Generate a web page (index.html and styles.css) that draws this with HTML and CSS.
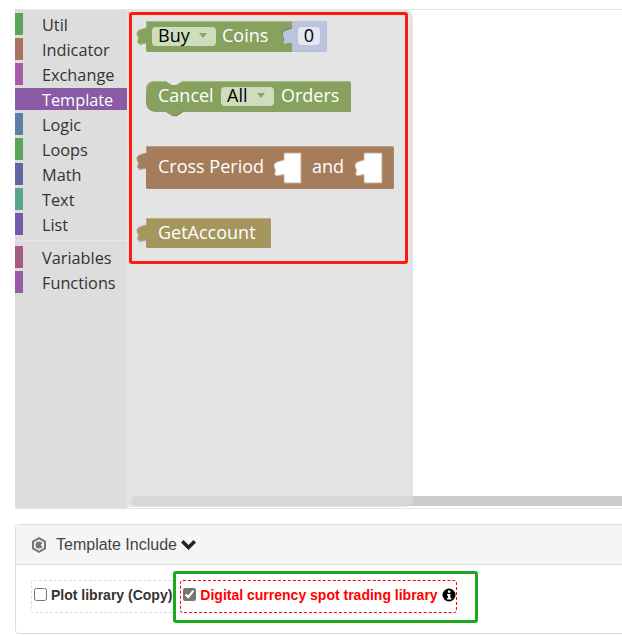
FILE: index.html
```html
<!DOCTYPE html>
<html lang="en">
<head>
<meta charset="utf-8">
<title>Template Include</title>
<link rel="stylesheet" href="styles.css">
</head>
<body>
<div class="page">
  <div class="editor">
    <ul class="toolbox">
      <li class="cat"><i class="swatch util"></i>Util</li>
      <li class="cat"><i class="swatch indicator"></i>Indicator</li>
      <li class="cat"><i class="swatch exchange"></i>Exchange</li>
      <li class="cat selected"><i class="swatch template"></i>Template</li>
      <li class="cat"><i class="swatch logic"></i>Logic</li>
      <li class="cat"><i class="swatch loops"></i>Loops</li>
      <li class="cat"><i class="swatch math"></i>Math</li>
      <li class="cat"><i class="swatch text"></i>Text</li>
      <li class="cat"><i class="swatch list"></i>List</li>
      <li class="sep"></li>
      <li class="cat"><i class="swatch variables"></i>Variables</li>
      <li class="cat"><i class="swatch functions"></i>Functions</li>
    </ul>
    <div class="scrollbar"></div>
    <div class="flyout">
      <svg class="blocks" width="286" height="497" viewBox="127 10 286 497">
        <defs>
          <path id="p-zero" d="M291 21H327V51H291V43c-3,-1 -5,2 -7.500,.5c-1.500,-1 -.5,-3.500 0,-5c.3,-1 -1.500,-2 -1.500,-5c0,-4 6,-4.500 9,-5.500V21z"/>
          <path id="p-buy" d="M146 21H291V28c-3,1 -9,1.500 -9,5.500c0,3 1.800,4 1.500,5c-.5,1.500 -1.500,4 0,5c2.500,1.500 4.500,-1.500 7.500,-.5V51H146V43c-3,-1 -5,2 -7.500,.5c-1.500,-1 -.5,-3.500 0,-5c.3,-1 -1.500,-2 -1.500,-5c0,-4 6,-4.500 9,-5.500V21z"/>
          <path id="p-cancel" d="M146 89a8,8 0 0 1 8,-8H165l7,4h4l7,-4H350V111H183l-7,4.500h-4l-7,-4.500H154a8,8 0 0 1 -8,-8z"/>
          <path id="p-cross" d="M146 146H393V188H146V168c-3,-1 -5,2 -7.500,.5c-1.500,-1 -.5,-3.500 0,-5c.3,-1 -1.500,-2 -1.500,-5c0,-4 6,-4.500 9,-5.500V146z"/>
          <path id="p-get" d="M146 218H270V247H146V240c-3,-1 -5,2 -7.500,.5c-1.500,-1 -.5,-3.500 0,-5c.3,-1 -1.500,-2 -1.500,-5c0,-4 6,-4.500 9,-5.500V218z"/>
          <path id="tab" d="M146 43c-3,-1 -5,2 -7.500,.5c-1.500,-1 -.5,-3.500 0,-5c.3,-1 -1.500,-2 -1.500,-5c0,-4 6,-4.500 9,-5.500"/>
        </defs>
        <!-- value block 0 -->
        <use href="#p-zero" class="s-blue"/>
        <use href="#p-zero" class="b-blue"/>
        <rect class="f-blue" x="298" y="27" width="22" height="18" rx="4"/>
        <text class="t-dark" x="309" y="41.500" text-anchor="middle">0</text>
        <!-- Buy Coins -->
        <use href="#p-buy" class="s-green"/>
        <use href="#p-buy" class="b-green"/>
        <use href="#tab" class="l-green"/>
        <path class="l-green" d="M146.500 28V21.500H290.500"/>
        <rect class="f-green" x="152" y="27" width="64" height="19" rx="4"/>
        <text class="t-dark" x="158" y="41.500">Buy</text>
        <path class="arrow" d="M199 33h8l-4 5z"/>
        <text class="t-light" x="222" y="41.500">Coins</text>
        <!-- Cancel All Orders -->
        <use href="#p-cancel" class="s-green"/>
        <use href="#p-cancel" class="b-green"/>
        <path class="l-green" d="M146.500 90a8,8 0 0 1 8,-8.500H165M183 81.500H350"/>
        <rect class="f-green" x="221" y="87" width="53" height="19" rx="4"/>
        <text class="t-light" x="158" y="101.500">Cancel</text>
        <text class="t-dark" x="227" y="101.500">All</text>
        <path class="arrow" d="M257 93h8l-4 5z"/>
        <text class="t-light" x="281" y="101.500">Orders</text>
        <!-- Cross Period -->
        <use href="#p-cross" class="s-brown"/>
        <use href="#p-cross" class="b-brown"/>
        <use href="#tab" class="l-brown" y="125"/>
        <path class="l-brown" d="M146.500 153V146.500H392.500"/>
        <path class="hole" d="M284 153H301V183H284V175c-3,-1 -6,2 -8.500,.5c-1.500,-1 -.5,-3.500 0,-5c.3,-1 -1.500,-2 -1.500,-5c0,-4 7,-4.500 10,-5.500V153z"/>
        <path class="hole" d="M364 153H382V183H364V175c-3,-1 -5,2 -7.500,.5c-1.500,-1 -.5,-3.500 0,-5c.3,-1 -1.500,-2 -1.500,-5c0,-4 6,-4.500 9,-5.500V153z"/>
        <text class="t-light" x="158" y="172.500">Cross Period</text>
        <text class="t-light" x="312" y="172.500">and</text>
        <!-- GetAccount -->
        <use href="#p-get" class="s-olive"/>
        <use href="#p-get" class="b-olive"/>
        <use href="#tab" class="l-olive" y="197"/>
        <path class="l-olive" d="M146.500 225V218.500H269.500"/>
        <text class="t-light" x="158" y="238.500">GetAccount</text>
      </svg>
    </div>
    <div class="canvas"></div>
    <div class="mark-red"></div>
  </div>
  <section class="panel">
    <header class="panel-head">
      <svg class="hex" width="16" height="16" viewBox="0 0 16 16">
        <path d="M8 1.200 14 4.600V11.400L8 14.800 2 11.400V4.600z"/>
        <circle cx="8" cy="8" r="3.500"/>
        <rect class="hex-cut" x="10" y="7" width="3" height="2"/>
      </svg>
      <span class="panel-title">Template Include</span>
      <svg class="chev" width="15" height="11" viewBox="0 0 15 11"><path d="M0 3.500 2.500 1 7.500 6 12.500 1 15 3.500 7.500 11z"/></svg>
    </header>
    <div class="panel-body">
      <label class="lib"><input type="checkbox">Plot library (Copy)</label>
      <label class="lib active"><input class="tick" type="checkbox" checked>Digital currency spot trading library
        <svg class="info" width="14" height="14" viewBox="0 0 14 14"><circle cx="7" cy="7" r="6.500"/><rect class="in" x="6" y="2.500" width="2.400" height="2.200"/><path class="in" d="M5 6h3.400v4h1v1.500H5V10h1V7.500H5z"/></svg>
      </label>
      <div class="mark-green"></div>
    </div>
  </section>
</div>
</body>
</html>
```
FILE: styles.css
```css
* { box-sizing: border-box; }
html, body { margin: 0; padding: 0; overflow: hidden; background: #fff; }
.page { padding: 9px 0 0 15px; width: 622px; height: 636px; overflow: hidden; }

.editor {
  position: relative;
  display: flex;
  height: 500px;
  border-top: 1px solid #e6e6e6;
  border-bottom: 1px solid #e6e6e6;
}
.toolbox {
  width: 112px;
  flex: none;
  margin: 0;
  padding: 3px 0 0;
  list-style: none;
  background: #ddd;
  font: 16.300px/24px "Open Sans", sans-serif;
  color: #333;
}
.cat {
  height: 22px;
  margin-bottom: 3px;
  display: flex;
  white-space: nowrap;
}
.swatch { width: 8px; height: 22px; margin-right: 19px; flex: none; }
.util { background: #5ba55b; }
.indicator { background: #a5745b; }
.exchange { background: #a55ba5; }
.template { background: #8a5aa5; }
.logic { background: #5b80a5; }
.loops { background: #5ba55b; }
.math { background: #5b67a5; }
.text { background: #5ba58c; }
.list { background: #745ba5; }
.variables { background: #a55b80; }
.functions { background: #995ba6; }
.selected { background: #8a5aa5; color: #fff; }
.sep { height: 1px; margin: 5px 0; background: #e6e6e6; }

.flyout {
  position: relative;
  width: 286px;
  flex: none;
  height: 497px;
  background: rgba(219, 219, 219, .745);
  border-radius: 0 8px 8px 0;
}
.blocks { display: block; font: 18px "Open Sans", sans-serif; }
.b-green { fill: #87a25f; }
.s-green { fill: #6d8449; transform: translate(.7px, .7px); }
.l-green { fill: none; stroke: #a5bc82; stroke-width: 1; }
.b-blue { fill: #bcc3dd; }
.s-blue { fill: #a4abc4; transform: translate(-.7px, .7px); }
.b-brown { fill: #a57d5b; }
.s-brown { fill: #84644a; transform: translate(.7px, .7px); }
.l-brown { fill: none; stroke: #bd9e82; stroke-width: 1; }
.b-olive { fill: #a4965c; }
.s-olive { fill: #847849; transform: translate(.7px, .7px); }
.l-olive { fill: none; stroke: #bdb182; stroke-width: 1; }
.hole { fill: #fff; stroke: #c4ab95; stroke-width: 1; }
.f-green { fill: #cfdcbd; }
.f-blue { fill: #e4e7f1; }
.arrow { fill: #88a55b; }
.t-light { fill: #fff; }
.t-dark { fill: #000; }
.canvas { flex: 1; }
.scrollbar {
  position: absolute;
  left: 116px;
  right: -2px;
  top: 486px;
  height: 10px;
  border-radius: 5px 0 0 5px;
  background: #ccc;
}
.mark-red {
  position: absolute;
  left: 114px;
  top: 2px;
  width: 279px;
  height: 252px;
  border: 3px solid #ff1a0f;
  border-radius: 3px;
  pointer-events: none;
}

.panel {
  margin-top: 15px;
  width: 640px;
  height: 110px;
  border: 1px solid #ddd;
  border-radius: 4px;
}
.panel-head {
  height: 40px;
  padding: 0 15px;
  display: flex;
  align-items: center;
  background: #f5f5f5;
  border-bottom: 1px solid #ddd;
}
.hex { margin-right: 9px; flex: none; }
.hex path { fill: none; stroke: #777; stroke-width: 2; }
.hex circle { fill: #777; }
.hex .hex-cut { fill: #f5f5f5; }
.panel-title { font: 16px "Liberation Sans", sans-serif; color: #444; margin-right: 4px; }
.chev path { fill: #222; }
.panel-body {
  position: relative;
  display: flex;
  padding: 15px;
  gap: 5px;
}
.lib {
  height: 33px;
  display: flex;
  align-items: center;
  padding: 0 2px 4px;
  border: 1px dashed #ddd;
  border-radius: 3px;
  font: bold 14px "Liberation Sans", sans-serif;
  color: #333;
  white-space: nowrap;
}
.lib input { width: 13px; height: 13px; margin: 0 4px 0 0; }
.tick { accent-color: #767676; }
.active { border-color: #f00; color: #f00; padding-right: 0; }
.info { margin-left: 4px; }
.info circle { fill: #000; }
.info .in { fill: #fff; }
.mark-green {
  position: absolute;
  left: 157px;
  top: 6px;
  width: 305px;
  height: 52px;
  border: 3px solid #1aaa1a;
  border-radius: 3px;
  pointer-events: none;
}
```
